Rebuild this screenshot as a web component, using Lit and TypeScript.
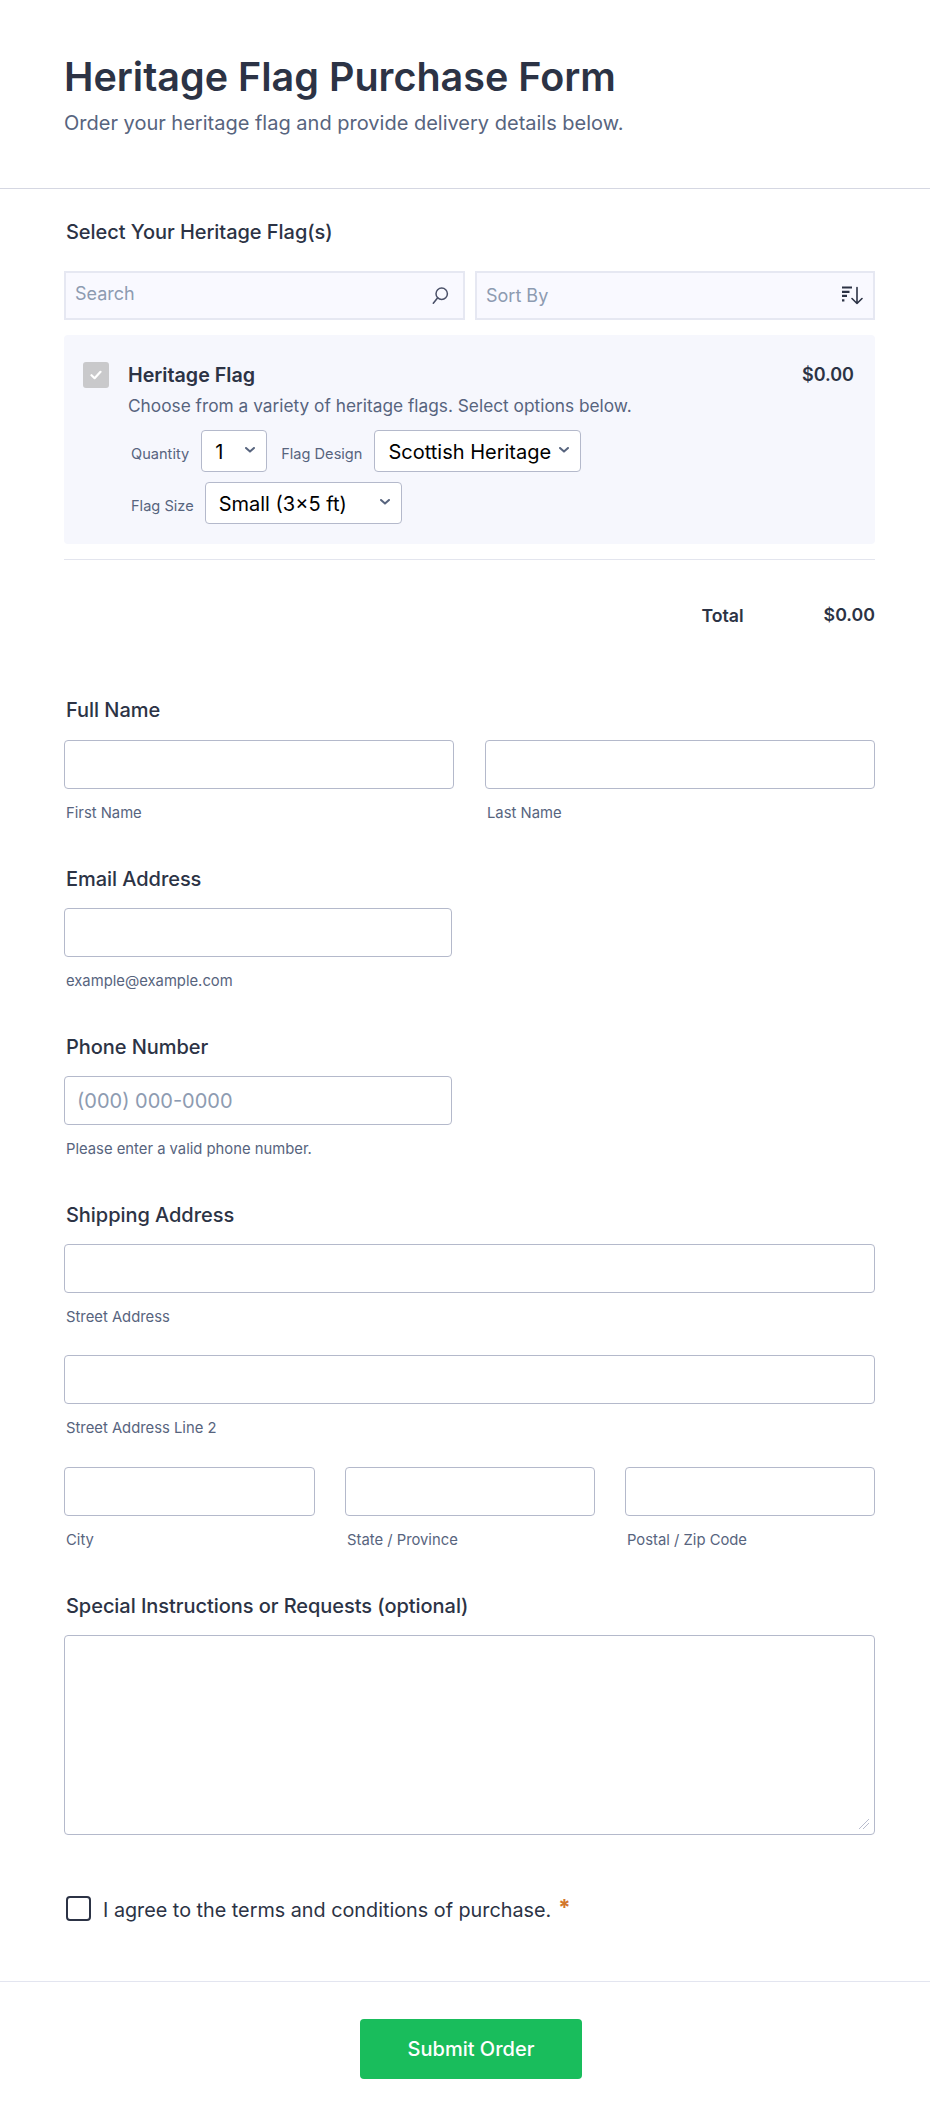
import { LitElement, html, css } from "lit";
import { customElement } from "lit/decorators.js";

const chevron = html`<svg class="chev" width="10" height="6" viewBox="0 0 10 6" fill="none"><path d="M1 1l4 3.6L9 1" stroke="#57647e" stroke-width="2" stroke-linecap="round" stroke-linejoin="round"/></svg>`;

@customElement("app-root")
export class AppRoot extends LitElement {
  static styles = css`
    :host { display: block; width: 930px; height: 2128px; background: #fff; font-family: Inter, "Noto Sans", sans-serif; color: #2c3345; overflow: hidden; }
    * { box-sizing: border-box; }
    header { padding: 53px 64px 0; border-bottom: 1px solid #d5d7e2; height: 189px; }
    h1 { margin: 0; font-size: 39.5px; line-height: 48px; font-weight: 600; }
    .sub { margin: 8px 0 0; font-size: 20px; line-height: 28px; color: #57647e; }
    main { padding: 31px 55px 0 64px; }
    .lbl { display: block; font-size: 20px; line-height: 24px; font-weight: 500; margin: 0 0 17px 2px; padding-top: 1px; letter-spacing: -0.05px; }
    .tools { display: grid; grid-template-columns: 401px 400px; gap: 10px; margin-top: 27px; }
    .lbl.first { margin-bottom: 0; padding-top: 0; }
    .tool { height: 49px; background: #f9f9ff; border: 2px solid #e6e8f2; display: flex; align-items: center; justify-content: space-between; padding: 0 10px 0 9px; font-size: 18px; color: #8d9bb1; }
    .tool.search { padding-right: 13px; }
    .tool.search span { position: relative; top: -2px; }
    .card { margin-top: 15px; height: 209px; background: #f6f7fd; border-radius: 4px; padding: 27px 21px 20px 19px; display: flex; gap: 19px; }
    .check { width: 26px; height: 26px; background: #c9c9cb; border-radius: 3px; flex: none; display: flex; align-items: center; justify-content: center; }
    .body { flex: 1; min-width: 0; }
    .titlerow { display: flex; justify-content: space-between; font-size: 19.7px; line-height: 24px; font-weight: 600; margin-top: 1px; }
    .titlerow .price { font-size: 18px; }
    .desc { font-size: 17.3px; line-height: 24px; color: #57647e; margin-top: 7px; }
    .opts { display: flex; flex-direction: column; gap: 10px; margin: 12px 0 0 3px; }
    .row { display: flex; align-items: center; gap: 14px; }
    .opt { display: flex; align-items: center; gap: 12px; }
    .opt.tight { gap: 11px; }
    .opt > label { font-size: 14.6px; line-height: 20px; color: #57647e; padding-top: 5px; }
    .sel { position: relative; display: block; height: 42px; }
    select { appearance: none; -webkit-appearance: none; height: 42px; width: 100%; background: #fff; border: 1px solid #b4b9cb; border-radius: 4px; font-family: inherit; font-size: 20px; color: #000; padding: 2px 24px 0 13px; margin: 0; }
    .chev { position: absolute; right: 12px; top: 17px; pointer-events: none; }
    .w1 { width: 66px; } .w2 { width: 207px; } .w3 { width: 197px; }
    .divider { border-top: 1px solid #e3e5ee; margin-top: 15px; }
    .total { display: flex; justify-content: flex-end; align-items: baseline; gap: 80px; margin-top: 43px; font-size: 17.8px; line-height: 24px; font-weight: 600; }
    .total .tl { font-size: 17.7px; position: relative; top: 1px; }
    .field { margin-top: 43px; }
    .field.f1 { margin-top: 71px; }
    .field.f1 .lbl { padding-top: 0; margin-bottom: 18px; }
    input.txt { display: block; height: 49px; width: 100%; background: #fff; border: 1px solid #b4b9cb; border-radius: 4px; padding: 0 12px; font-family: inherit; font-size: 20px; color: #2c3345; margin: 0; }
    input.txt::placeholder { color: #8d9bb1; opacity: 1; }
    input.txt.w388 { width: 388px; }
    input.txt.mt28 { margin-top: 28px; }
    .help { display: block; font-size: 14.8px; line-height: 20px; color: #57647e; margin: 14px 0 0 2px; }
    .two { display: grid; grid-template-columns: 390px 390px; gap: 31px; }
    .three { display: grid; grid-template-columns: 251px 250px 250px; gap: 30px; margin-top: 29px; }
    textarea { display: block; width: 100%; height: 200px; border: 1px solid #b4b9cb; border-radius: 4px; background: #fff; margin: 0; padding: 8px 12px; font-family: inherit; font-size: 16px; resize: vertical; }
    textarea::-webkit-resizer { background: linear-gradient(135deg, transparent 46%, #b9bdce 46% 54%, transparent 54% 66%, #b9bdce 66% 74%, transparent 74%) 0 0 / 10px 10px no-repeat; }
    .agree { display: flex; align-items: center; gap: 12px; margin: 61px 0 0 2px; height: 25px; font-size: 19.8px; line-height: 24px; }
    .box { width: 25px; height: 25px; flex: none; border: 2px solid #2c3345; border-radius: 4px; background: #fff; }
    .agree .txt { position: relative; top: 1px; }
    .req { color: #d2762c; margin-left: 7px; position: relative; top: -2px; font-size: 22px; font-weight: 700; }
    footer { border-top: 1px solid #e3e5f0; margin-top: 60px; padding: 37px 0 0 12px; display: flex; justify-content: center; }
    button { width: 222px; height: 60px; background: #19bd5c; color: #fff; border: 0; border-radius: 4px; font-family: inherit; font-size: 20px; font-weight: 500; }
  `;

  render() {
    return html`
      <header>
        <h1>Heritage Flag Purchase Form</h1>
        <p class="sub">Order your heritage flag and provide delivery details below.</p>
      </header>
      <main>
        <span class="lbl first">Select Your Heritage Flag(s)</span>
        <div class="tools">
          <div class="tool search">
            <span>Search</span>
            <svg width="20" height="20" viewBox="0 0 20 20" fill="none"><circle cx="11.7" cy="7.8" r="5.7" stroke="#4a5068" stroke-width="1.5"/><path d="M7.7 11.8L3.3 17.2" stroke="#4a5068" stroke-width="1.6" stroke-linecap="round"/></svg>
          </div>
          <div class="tool">
            <span>Sort By</span>
            <svg width="22" height="20" viewBox="0 0 22 20" fill="none" stroke="#2c3345"><path d="M1 1.5h10M1 5.8h7.5M1 9.8h5M1 14.3h2.4" stroke-width="2.2"/><path d="M16 1.5v16M11 12.5l5 5 5-5" stroke-width="1.6" stroke-linecap="round" stroke-linejoin="round"/></svg>
          </div>
        </div>
        <div class="card">
          <div class="check"><svg width="12" height="10" viewBox="0 0 12 10" fill="none"><path d="M1.5 5.2L4.6 8.2 10.5 1.8" stroke="#fff" stroke-width="2.2" stroke-linecap="round" stroke-linejoin="round"/></svg></div>
          <div class="body">
            <div class="titlerow"><span>Heritage Flag</span><span class="price">$0.00</span></div>
            <div class="desc">Choose from a variety of heritage flags. Select options below.</div>
            <div class="opts">
              <div class="row">
                <div class="opt"><label>Quantity</label><span class="sel w1"><select><option>1</option></select>${chevron}</span></div>
                <div class="opt"><label>Flag Design</label><span class="sel w2"><select><option>Scottish Heritage</option></select>${chevron}</span></div>
              </div>
              <div class="row">
                <div class="opt tight"><label>Flag Size</label><span class="sel w3"><select><option>Small (3×5 ft)</option></select>${chevron}</span></div>
              </div>
            </div>
          </div>
        </div>
        <div class="divider"></div>
        <div class="total"><span class="tl">Total</span><span>$0.00</span></div>

        <div class="field f1">
          <label class="lbl">Full Name</label>
          <div class="two">
            <div><input class="txt" /><span class="help">First Name</span></div>
            <div><input class="txt" /><span class="help">Last Name</span></div>
          </div>
        </div>
        <div class="field">
          <label class="lbl">Email Address</label>
          <input class="txt w388" />
          <span class="help">example@example.com</span>
        </div>
        <div class="field">
          <label class="lbl">Phone Number</label>
          <input class="txt w388" placeholder="(000) 000-0000" />
          <span class="help">Please enter a valid phone number.</span>
        </div>
        <div class="field">
          <label class="lbl">Shipping Address</label>
          <input class="txt" /><span class="help">Street Address</span>
          <input class="txt mt28" /><span class="help">Street Address Line 2</span>
          <div class="three">
            <div><input class="txt" /><span class="help">City</span></div>
            <div><input class="txt" /><span class="help">State / Province</span></div>
            <div><input class="txt" /><span class="help">Postal / Zip Code</span></div>
          </div>
        </div>
        <div class="field">
          <label class="lbl">Special Instructions or Requests (optional)</label>
          <textarea></textarea>
        </div>
        <div class="agree"><span class="box"></span><span class="txt">I agree to the terms and conditions of purchase.<span class="req">*</span></span></div>
      </main>
      <footer><button>Submit Order</button></footer>
    `;
  }
}
